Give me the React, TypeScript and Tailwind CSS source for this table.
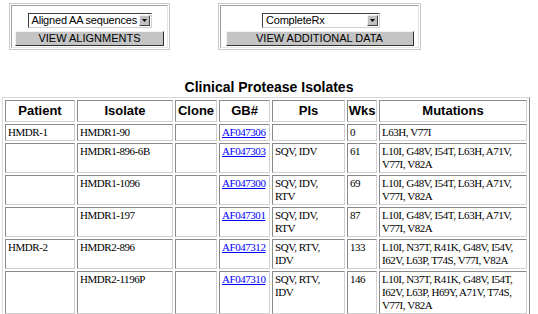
const rows = [
  { patient: "HMDR-1", isolate: "HMDR1-90", gb: "AF047306", pis: [], wks: "0", muts: ["L63H, V77I"] },
  { patient: "", isolate: "HMDR1-896-6B", gb: "AF047303", pis: ["SQV, IDV"], wks: "61", muts: ["L10I, G48V, I54T, L63H, A71V,", "V77I, V82A"] },
  { patient: "", isolate: "HMDR1-1096", gb: "AF047300", pis: ["SQV, IDV,", "RTV"], wks: "69", muts: ["L10I, G48V, I54T, L63H, A71V,", "V77I, V82A"] },
  { patient: "", isolate: "HMDR1-197", gb: "AF047301", pis: ["SQV, IDV,", "RTV"], wks: "87", muts: ["L10I, G48V, I54T, L63H, A71V,", "V77I, V82A"] },
  { patient: "HMDR-2", isolate: "HMDR2-896", gb: "AF047312", pis: ["SQV, RTV,", "IDV"], wks: "133", muts: ["L10I, N37T, R41K, G48V, I54V,", "I62V, L63P, T74S, V77I, V82A"] },
  { patient: "", isolate: "HMDR2-1196P", gb: "AF047310", pis: ["SQV, RTV,", "IDV"], wks: "146", muts: ["L10I, N37T, R41K, G48V, I54T,", "I62V, L63P, H69Y, A71V, T74S,", "V77I, V82A"] },
];

const headers = [
  { label: "Patient", w: "w-[70px]" },
  { label: "Isolate", w: "w-[96px]" },
  { label: "Clone", w: "w-[42px]" },
  { label: "GB#", w: "w-[51px]" },
  { label: "PIs", w: "w-[73px]" },
  { label: "Wks", w: "w-[30px]" },
  { label: "Mutations", w: "w-[148px]" },
];

const cell =
  "border border-t-[#8a8a8a] border-l-[#8a8a8a] border-b-[#d0d0d0] border-r-[#d0d0d0] px-[2px] py-[1px] align-top text-left";

function Lines({ items }: { items: string[] }) {
  return (
    <>
      {items.map((l, i) => (
        <div key={i} className="whitespace-nowrap">{l}</div>
      ))}
    </>
  );
}

function Picker({ box, select, button, label, option }: { box: string; select: string; button: string; label: string; option: string }) {
  return (
    <div className={`${box} h-[47px] border border-[#c8c8c8] p-[1px]`}>
      <div className="h-full border border-t-[#a0a0a0] border-l-[#a0a0a0] border-b-[#e4e4e4] border-r-[#e4e4e4] flex flex-col items-center pt-[7px] gap-[3px]">
        <div className={`${select} h-[15px] bg-white border border-t-[#404040] border-l-[#404040] border-b-[#d0d0d0] border-r-[#d0d0d0] flex items-center justify-between pl-[3px] pr-[1px]`}>
          <span className="text-[11px] leading-[13px] text-black whitespace-nowrap tracking-[-0.2px]">{option}</span>
          <div className="shrink-0 w-[11px] h-[11px] bg-[#c0c0c0] border border-t-[#f0f0f0] border-l-[#f0f0f0] border-b-[#404040] border-r-[#404040] flex items-center justify-center">
            <svg width="5" height="3" viewBox="0 0 5 3"><path d="M0 0h5L2.5 3z" fill="#000" /></svg>
          </div>
        </div>
        <div className={`${button} h-[15px] bg-[#c4c4c4] border border-t-[#f2f2f2] border-l-[#f2f2f2] border-b-[#303030] border-r-[#303030] flex items-center justify-center text-[11px] leading-[13px] text-black whitespace-nowrap`}>
          {label}
        </div>
      </div>
    </div>
  );
}

export default function App() {
  return (
    <div className="w-[538px] h-[314px] bg-white overflow-hidden font-['Liberation_Sans',Arial,sans-serif]">
      <div className="flex pt-[3px] pl-[9px] gap-[48px]">
        <Picker box="w-[161px]" select="w-[124px]" button="w-[149px]" label="VIEW ALIGNMENTS" option="Aligned AA sequences" />
        <Picker box="w-[203px]" select="w-[118px] ml-[3px]" button="w-[188px]" label="VIEW ADDITIONAL DATA" option="CompleteRx" />
      </div>

      <h1 className="mt-[29px] text-center text-[14px] leading-[16px] font-bold text-black">
        Clinical Protease Isolates
      </h1>

      <table className="ml-[2px] mt-[2px] table-fixed border-separate border-spacing-[2px] border border-t-[#d8d8d8] border-l-[#d8d8d8] border-b-[#8a8a8a] border-r-[#8a8a8a]">
        <thead>
          <tr>
            {headers.map((h) => (
              <th key={h.label} className={`${h.w} h-[22px] border border-t-[#8a8a8a] border-l-[#8a8a8a] border-b-[#d0d0d0] border-r-[#d0d0d0] p-0 text-center align-middle text-[13px] font-bold text-black`}>
                {h.label}
              </th>
            ))}
          </tr>
        </thead>
        <tbody className="font-['Liberation_Serif','Times_New_Roman',serif] text-[11px] leading-[13px] tracking-[-0.45px] text-black">
          {rows.map((r) => (
            <tr key={r.isolate}>
              <td className={cell}>{r.patient}</td>
              <td className={cell}>{r.isolate}</td>
              <td className={cell}></td>
              <td className={cell}>
                <a href="#" className="text-[#0000ff] underline">{r.gb}</a>
              </td>
              <td className={cell}><Lines items={r.pis} /></td>
              <td className={cell}>{r.wks}</td>
              <td className={cell}><Lines items={r.muts} /></td>
            </tr>
          ))}
        </tbody>
      </table>
    </div>
  );
}
